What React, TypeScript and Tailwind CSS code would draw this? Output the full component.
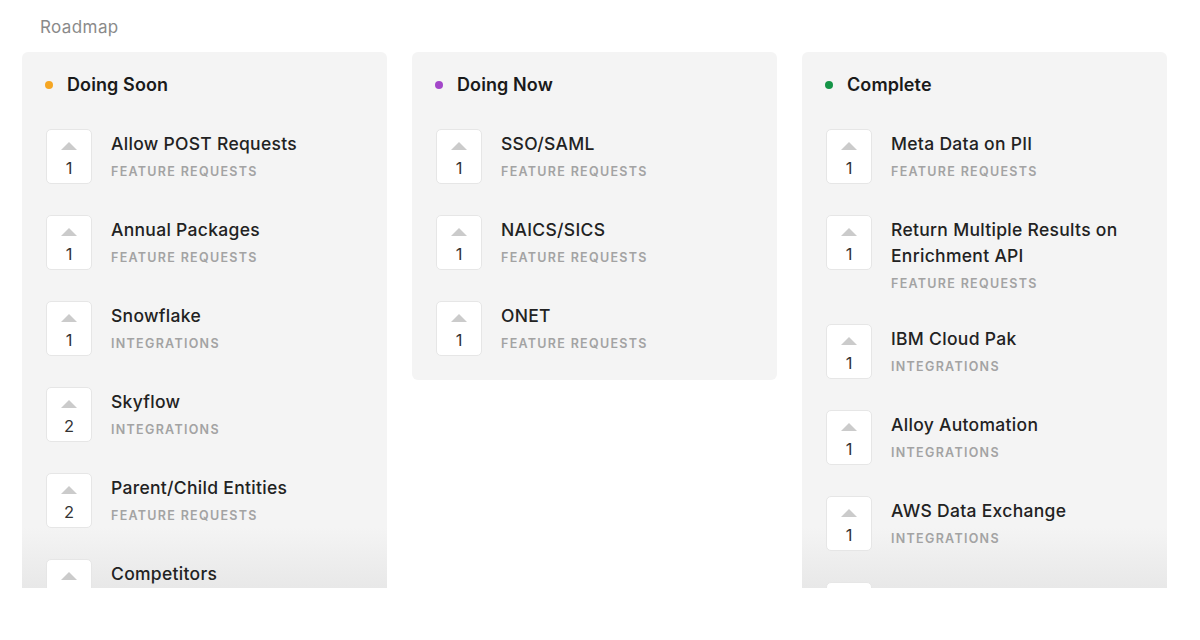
import React from 'react'

interface Item {
  title: string
  category: string
  votes: number
}

interface Column {
  name: string
  dot: string
  items: Item[]
  clipped?: boolean
}

const FR = 'Feature Requests'
const INT = 'Integrations'

const columns: Column[] = [
  {
    name: 'Doing Soon',
    dot: 'bg-[#f5a623]',
    clipped: true,
    items: [
      { title: 'Allow POST Requests', category: FR, votes: 1 },
      { title: 'Annual Packages', category: FR, votes: 1 },
      { title: 'Snowflake', category: INT, votes: 1 },
      { title: 'Skyflow', category: INT, votes: 2 },
      { title: 'Parent/Child Entities', category: FR, votes: 2 },
      { title: 'Competitors', category: FR, votes: 1 },
    ],
  },
  {
    name: 'Doing Now',
    dot: 'bg-[#a347c9]',
    items: [
      { title: 'SSO/SAML', category: FR, votes: 1 },
      { title: 'NAICS/SICS', category: FR, votes: 1 },
      { title: 'ONET', category: FR, votes: 1 },
    ],
  },
  {
    name: 'Complete',
    dot: 'bg-[#159447]',
    clipped: true,
    items: [
      { title: 'Meta Data on PII', category: FR, votes: 1 },
      { title: 'Return Multiple Results on Enrichment API', category: FR, votes: 1 },
      { title: 'IBM Cloud Pak', category: INT, votes: 1 },
      { title: 'Alloy Automation', category: INT, votes: 1 },
      { title: 'AWS Data Exchange', category: INT, votes: 1 },
      { title: '', category: '', votes: 1 },
    ],
  },
]

function VoteBox({ votes }: { votes: number }) {
  return (
    <div className="flex h-[55px] w-[46px] shrink-0 flex-col items-center rounded-[5px] border border-[#e6e6e6] bg-white">
      <svg width="16" height="8" viewBox="0 0 16 8" className="mt-[12px]">
        <polygon points="8,0 16,8 0,8" fill="#cbcbcb" />
      </svg>
      <span className="mt-[9px] text-[16.5px] leading-[18px] text-[#333]">{votes}</span>
    </div>
  )
}

function RoadmapColumn({ col }: { col: Column }) {
  return (
    <div
      className={`relative w-[365px] shrink-0 overflow-hidden bg-[#f4f4f4] ${
        col.clipped ? 'h-[536px] rounded-t-[6px]' : 'rounded-[6px]'
      }`}
    >
      {col.clipped && (
        <div className="pointer-events-none absolute inset-x-0 bottom-0 h-[60px] bg-gradient-to-b from-[#f4f4f4] to-[#e8e8e8]" />
      )}
      <div className="relative px-6 pt-[22px] pb-6">
        <div className="flex items-center">
          <span className={`ml-[-1px] h-2 w-2 rounded-full ${col.dot}`} />
          <span className="ml-[14px] text-[18px] leading-[22px] font-semibold tracking-[0.1px] text-[#1a1a1a]">
            {col.name}
          </span>
        </div>
        <div className="mt-[33px] flex flex-col gap-[31px]">
          {col.items.map((it, i) => (
            <div key={i} className="flex">
              <VoteBox votes={it.votes} />
              <div className="ml-[19px] flex flex-col pt-[2px]">
                <span className="text-[17.5px] leading-[26px] font-medium tracking-[0.3px] text-[#222]">
                  {it.title}
                </span>
                <span className="mt-[6px] text-[12.5px] leading-[18px] font-semibold tracking-[1.3px] text-[#a3a3a3] uppercase">
                  {it.category}
                </span>
              </div>
            </div>
          ))}
        </div>
      </div>
    </div>
  )
}

export default function App() {
  return (
    <div className="h-[640px] w-[1200px] bg-white font-['Inter','Liberation_Sans',sans-serif]">
      <div className="pt-[16px] pl-[40px] text-[17px] leading-[22px] tracking-[0.4px] text-[#8a8a8a]">Roadmap</div>
      <div className="mt-[14px] flex items-start gap-[25px] pl-[22px]">
        {columns.map((c) => (
          <RoadmapColumn key={c.name} col={c} />
        ))}
      </div>
    </div>
  )
}
